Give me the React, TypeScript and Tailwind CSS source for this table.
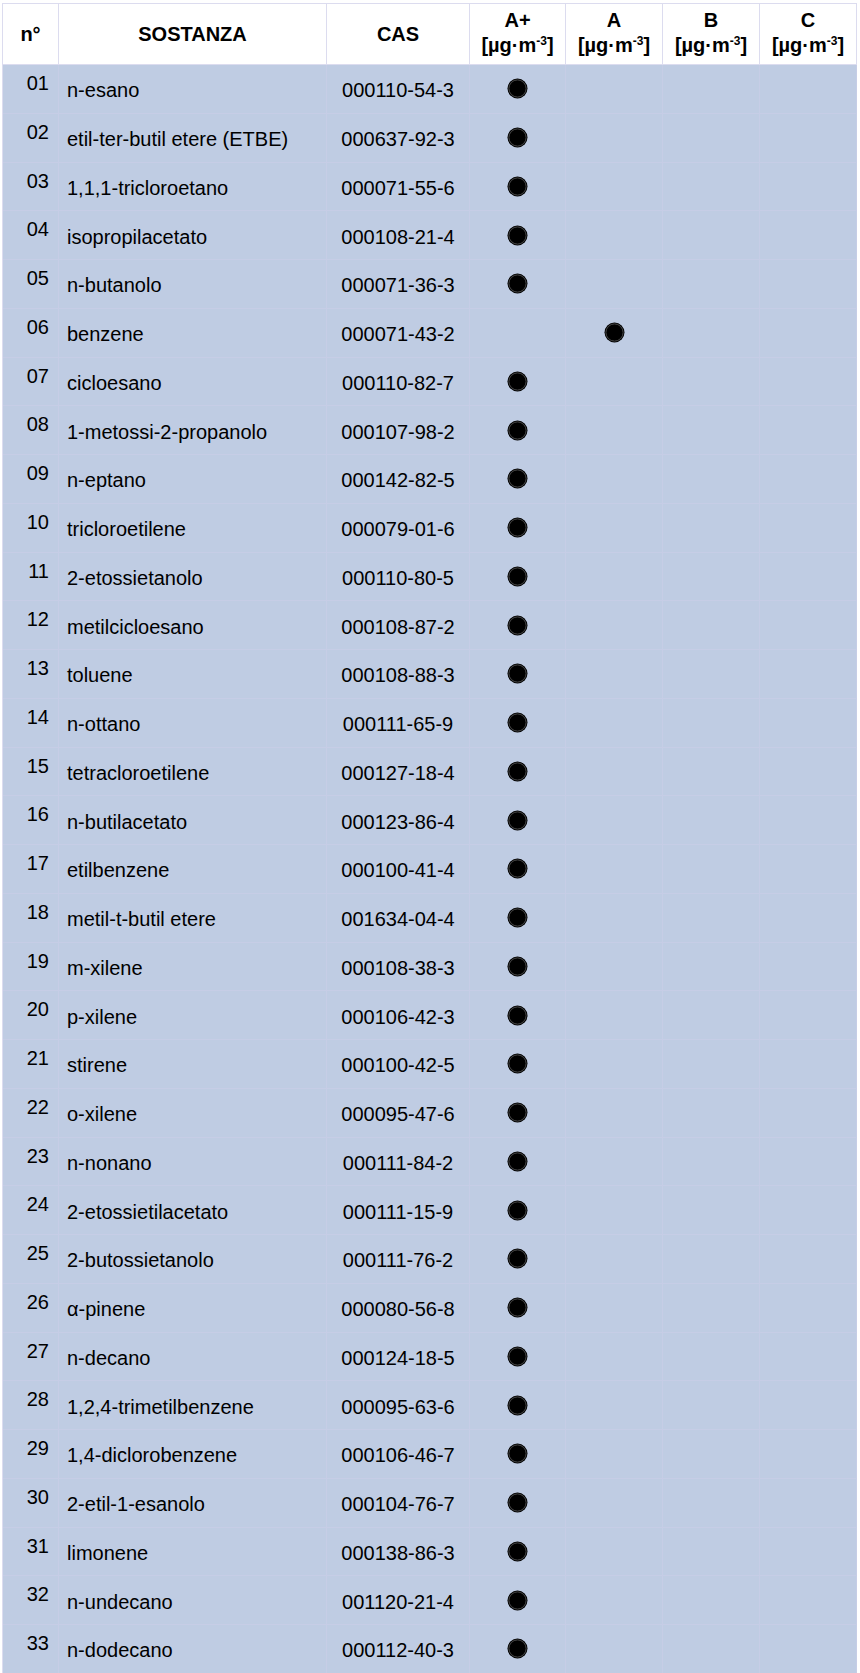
const rows: [string, string, string, number][] = [
  ["01", "n-esano", "000110-54-3", 0],
  ["02", "etil-ter-butil etere (ETBE)", "000637-92-3", 0],
  ["03", "1,1,1-tricloroetano", "000071-55-6", 0],
  ["04", "isopropilacetato", "000108-21-4", 0],
  ["05", "n-butanolo", "000071-36-3", 0],
  ["06", "benzene", "000071-43-2", 1],
  ["07", "cicloesano", "000110-82-7", 0],
  ["08", "1-metossi-2-propanolo", "000107-98-2", 0],
  ["09", "n-eptano", "000142-82-5", 0],
  ["10", "tricloroetilene", "000079-01-6", 0],
  ["11", "2-etossietanolo", "000110-80-5", 0],
  ["12", "metilcicloesano", "000108-87-2", 0],
  ["13", "toluene", "000108-88-3", 0],
  ["14", "n-ottano", "000111-65-9", 0],
  ["15", "tetracloroetilene", "000127-18-4", 0],
  ["16", "n-butilacetato", "000123-86-4", 0],
  ["17", "etilbenzene", "000100-41-4", 0],
  ["18", "metil-t-butil etere", "001634-04-4", 0],
  ["19", "m-xilene", "000108-38-3", 0],
  ["20", "p-xilene", "000106-42-3", 0],
  ["21", "stirene", "000100-42-5", 0],
  ["22", "o-xilene", "000095-47-6", 0],
  ["23", "n-nonano", "000111-84-2", 0],
  ["24", "2-etossietilacetato", "000111-15-9", 0],
  ["25", "2-butossietanolo", "000111-76-2", 0],
  ["26", "α-pinene", "000080-56-8", 0],
  ["27", "n-decano", "000124-18-5", 0],
  ["28", "1,2,4-trimetilbenzene", "000095-63-6", 0],
  ["29", "1,4-diclorobenzene", "000106-46-7", 0],
  ["30", "2-etil-1-esanolo", "000104-76-7", 0],
  ["31", "limonene", "000138-86-3", 0],
  ["32", "n-undecano", "001120-21-4", 0],
  ["33", "n-dodecano", "000112-40-3", 0],
];

const classes = ["A+", "A", "B", "C"];

function Dot() {
  return (
    <svg width="21" height="21" viewBox="0 0 21 21">
      <circle cx="10.5" cy="10.5" r="10" fill="#000" />
      <circle cx="10.5" cy="10.5" r="8.6" fill="none" stroke="#5a5a5a" strokeWidth="0.8" />
    </svg>
  );
}

const grid = "grid grid-cols-[56px_268px_143px_96px_97px_97px_97px]";
const head = "border-r border-b border-[#dcdcef]";
const body = "border-r border-b border-[#c6cde6]";

export default function App() {
  return (
    <div className="min-h-screen bg-white pl-[2px] pt-[3px] font-['Liberation_Sans',Arial,sans-serif] text-[20px] text-black">
      <div className="w-[855px] border-l border-t border-[#dcdcef]">
        {/* header */}
        <div className={`${grid} h-[61px] bg-white font-bold`}>
          <div className={`${head} flex items-center justify-center`}>n°</div>
          <div className={`${head} flex items-center justify-center`}>SOSTANZA</div>
          <div className={`${head} flex items-center justify-center`}>CAS</div>
          {classes.map((c) => (
            <div key={c} className={`${head} flex flex-col items-center justify-center leading-[25px] pb-[3px]`}>
              <span>{c}</span>
              <span>
                [µg·m<sup className="text-[12px] -top-[0.55em]">-3</sup>]
              </span>
            </div>
          ))}
        </div>

        {/* rows */}
        {rows.map(([n, name, cas, col]) => (
          <div key={n} className={`${grid} h-[48.75px] bg-[#bfcce3]`}>
            <div className={`${body} flex justify-end pr-[9px] pt-[6px] leading-[24px]`}>{n}</div>
            <div className={`${body} flex items-center pl-2 pt-[3px]`}>{name}</div>
            <div className={`${body} flex items-center justify-center pt-[3px]`}>{cas}</div>
            {classes.map((c, i) => (
              <div key={c} className={`${body} flex items-center justify-center`}>
                {i === col ? <Dot /> : null}
              </div>
            ))}
          </div>
        ))}
      </div>
    </div>
  );
}
